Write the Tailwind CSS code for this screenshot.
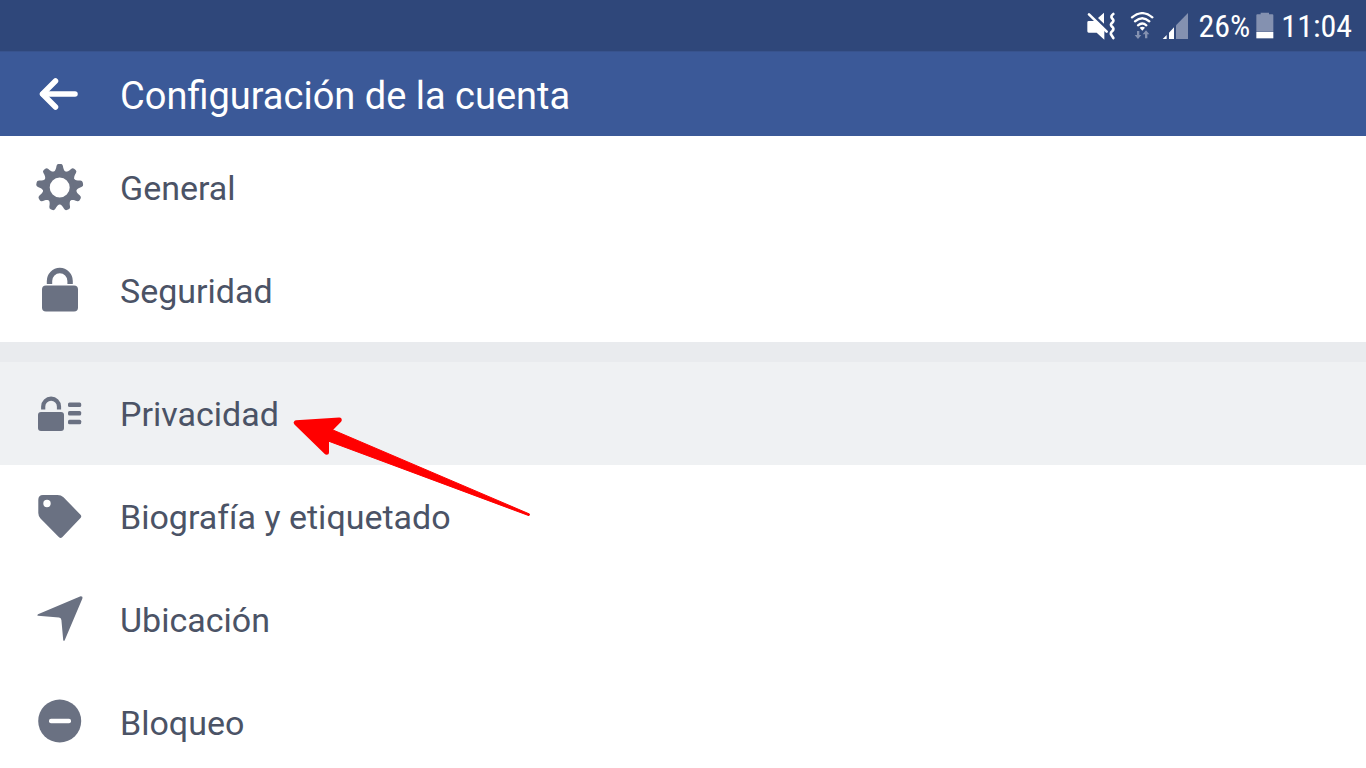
<!DOCTYPE html>
<html lang="es">
<head>
  <meta charset="UTF-8" />
  <meta name="viewport" content="width=device-width, initial-scale=1.0"/>
  <title>Configuración de la cuenta</title>
  <script src="https://cdn.jsdelivr.net/npm/@tailwindcss/browser@4"></script>
</head>
<body class="bg-white h-screen overflow-hidden font-['Roboto',sans-serif] text-[#4b5366]">

  <!-- Status bar -->
  <div class="h-[51px] bg-[#2f477a] text-white flex items-center justify-end pr-[14px] font-['Roboto_Condensed','Liberation_Sans_Narrow','Roboto',sans-serif] text-[32px]">
    <!-- Muted / vibrate -->
    <svg class="w-[30px] h-7 mr-[14px]" viewBox="20 20 90 84" fill="none" aria-hidden="true">
      <path d="M24 51 Q24 47 28 47 H48 L75 73 V103 L52 82 H28 Q24 82 24 78Z" fill="white"/>
      <path d="M56 38 L74 22 V55Z" fill="white"/>
      <path d="M29 27 L82 79" stroke="white" stroke-width="8" stroke-linecap="round"/>
      <path d="M102 26 Q93 33 98 39 Q106 45 99 52 Q91 58 98 64 Q106 70 99 77 Q91 83 97 90 L102 98" stroke="white" stroke-width="8" stroke-linejoin="round" stroke-linecap="round"/>
    </svg>
    <!-- Wifi -->
    <svg class="w-6 h-7 mr-2" viewBox="150 20 72 84" fill="none" aria-hidden="true">
      <g stroke="white" stroke-width="7" stroke-linecap="round">
        <path d="M156 36 Q187 11 217 36"/>
        <path d="M165 48 Q187 29 208 48"/>
        <path d="M174 60 Q187 49 199 60"/>
      </g>
      <path d="M179 67 Q187 62 195 67 L187 76Z" fill="white"/>
      <path d="M171 77 h7 v12 h6 l-10 12 l-10 -12 h7Z M195 99 h7 v-12 h6 l-10 -12 l-10 12 h7Z" fill="#8491b0"/>
    </svg>
    <!-- Signal -->
    <svg class="w-[27px] h-7 mr-[10px]" viewBox="246 20 81 84" aria-hidden="true">
      <path d="M248 101 L260 89 V101Z M267 82 L282 66 V101 H267Z" fill="white"/>
      <path d="M288 60 L324 23 V101 H288Z" fill="#8491b0"/>
    </svg>
    <span>26%</span>
    <!-- Battery -->
    <svg class="w-[18px] h-7 ml-[6px] mr-[7px]" viewBox="0 0 54 84" aria-hidden="true">
      <path d="M1 10 Q1 7 4 7 H14 V2 H39 V7 H49 Q52 7 52 10 V59 H1Z" fill="#8491b0"/>
      <path d="M1 60 H52 V79 H1Z" fill="white"/>
    </svg>
    <time>11:04</time>
  </div>

  <!-- Header -->
  <header class="h-[85px] bg-[#3b5998] text-white flex items-center pl-9 gap-9 border-t border-[#38538d]">
    <button type="button" aria-label="Atrás" class="w-12 h-12 cursor-pointer">
      <svg class="w-12 h-12" viewBox="0 0 48 48" fill="none" stroke="white" stroke-width="5.500" stroke-linecap="round" stroke-linejoin="round" aria-hidden="true">
        <path d="M19.500 11 L6.500 24 L19.500 37" />
        <path d="M7 24 H39"/>
      </svg>
    </button>
    <h1 class="text-[38px] leading-[48px] pt-1">Configuración de la cuenta</h1>
  </header>

  <!-- Settings list -->
  <main>
    <ul class="text-[34px] leading-[48px]">
      <li>
        <a href="#general" class="h-[103px] pl-9 flex items-center gap-9">
          <svg class="w-12 h-12" viewBox="0 0 48 48" fill="#6a7182" aria-hidden="true">
            <defs>
              <path id="tooth" d="M-7 -14 C-4 -17 -3.600 -19 -3.200 -21.500 Q-2.800 -23.600 -1 -23.600 H1 Q2.800 -23.600 3.200 -21.500 C3.600 -19 4 -17 7 -14Z"/>
            </defs>
            <g transform="translate(23.700 23.500)">
              <circle r="13.500" fill="none" stroke="#6a7182" stroke-width="7"/>
              <use href="#tooth"/>
              <use href="#tooth" transform="rotate(40)"/>
              <use href="#tooth" transform="rotate(80)"/>
              <use href="#tooth" transform="rotate(120)"/>
              <use href="#tooth" transform="rotate(160)"/>
              <use href="#tooth" transform="rotate(200)"/>
              <use href="#tooth" transform="rotate(240)"/>
              <use href="#tooth" transform="rotate(280)"/>
              <use href="#tooth" transform="rotate(320)"/>
            </g>
          </svg>
          <span class="pt-px">General</span>
        </a>
      </li>
      <li>
        <a href="#seguridad" class="h-[103px] pl-9 flex items-center gap-9">
          <svg class="w-12 h-12" viewBox="0 0 48 48" fill="#6a7182" aria-hidden="true">
            <path d="M13.500 17 V14 A10.300 10.500 0 0 1 34.100 14 V17" fill="none" stroke="#6a7182" stroke-width="5.400"/>
            <rect x="6" y="18.500" width="36" height="26" rx="4"/>
          </svg>
          <span class="pt-px">Seguridad</span>
        </a>
      </li>
      <li class="h-5 bg-[#e9ebee]" role="separator"></li>
      <li class="relative">
        <a href="#privacidad" class="h-[103px] pl-9 flex items-center gap-9 bg-[#eff1f3]">
          <svg class="w-12 h-12" viewBox="0 0 48 48" fill="#6a7182" aria-hidden="true">
            <path d="M7.200 19.500 V16.500 A7.900 7.800 0 0 1 23 16.500 V19.500" fill="none" stroke="#6a7182" stroke-width="4.200"/>
            <rect x="2" y="22" width="26" height="19" rx="3"/>
            <rect x="32" y="12.600" width="13.200" height="4.400" rx="1.500"/>
            <rect x="32" y="21.100" width="13.200" height="4.400" rx="1.500"/>
            <rect x="32" y="29.800" width="13.200" height="4.400" rx="1.500"/>
          </svg>
          <span class="pt-px">Privacidad</span>
        </a>
        <!-- Arrow that points at the row -->
        <svg class="absolute left-[292px] top-[52px] w-60 h-[106px] pointer-events-none" viewBox="0 0 240 106" fill="red" stroke="red" stroke-linejoin="round" aria-hidden="true">
          <path d="M4.200 8.800 L47.300 6 L36.500 17 L34.500 24 L34.500 38.200Z" stroke-width="5"/>
          <path d="M34 13 L237.500 100 L237 101.700 L34 26.200Z"/>
        </svg>
      </li>
      <li>
        <a href="#biografia" class="h-[103px] pl-9 flex items-center gap-9">
          <svg class="w-12 h-12" viewBox="0 0 48 48" fill="#6a7182" aria-hidden="true">
            <path fill-rule="evenodd" d="M7 2 H21.500 Q25 2 27.500 4.300 L44.500 21.700 Q46 23.400 44.500 25 L26.200 44.300 Q24.600 45.800 23 44.300 L4.500 25.500 Q2.300 23.200 2.300 20 V6.800 Q2.300 2 7 2Z M14.700 10.500 A3.700 3.700 0 1 0 7.300 10.500 A3.700 3.700 0 1 0 14.700 10.500Z"/>
          </svg>
          <span class="pt-px">Biografía y etiquetado</span>
        </a>
      </li>
      <li>
        <a href="#ubicacion" class="h-[103px] pl-9 flex items-center gap-9">
          <svg class="w-12 h-12" viewBox="0 0 48 48" fill="#6a7182" aria-hidden="true">
            <path d="M44 .4 Q47.200 0 46.300 2.800 L28.800 44 Q28 46 27.200 44 L25.400 24 Q25.200 21.800 23 21.600 L2 19.800 Q.4 19.300 2 18.300Z"/>
          </svg>
          <span class="pt-px">Ubicación</span>
        </a>
      </li>
      <li>
        <a href="#bloqueo" class="h-[103px] pl-9 flex items-center gap-9">
          <svg class="w-12 h-12" viewBox="0 0 48 48" aria-hidden="true">
            <circle cx="23.700" cy="22" r="21.500" fill="#6a7182"/>
            <rect x="13" y="19.700" width="22" height="4.600" rx="2" fill="white"/>
          </svg>
          <span class="pt-px">Bloqueo</span>
        </a>
      </li>
    </ul>
  </main>

</body>
</html>
